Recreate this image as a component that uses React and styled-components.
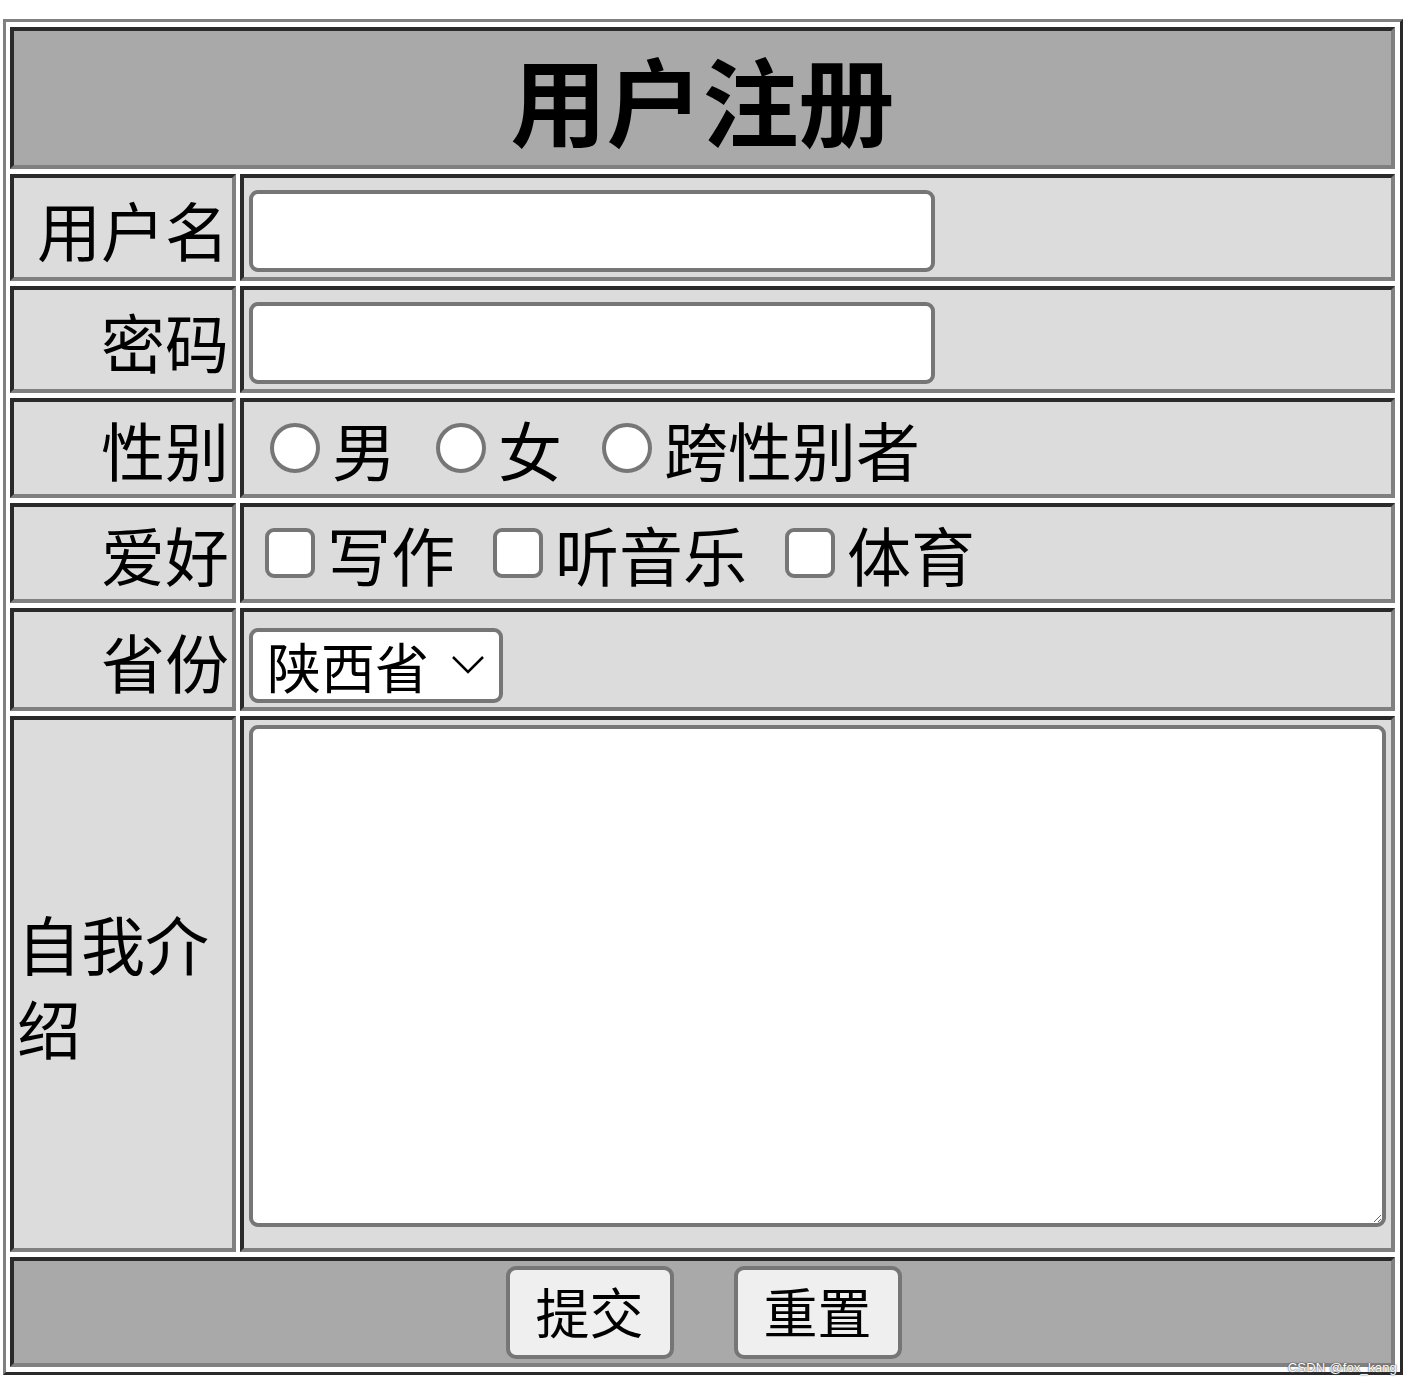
import React from "react";
import styled, { createGlobalStyle } from "styled-components";

/* --- Global --- */
const GlobalStyle = createGlobalStyle`
  *, *::before, *::after {
    box-sizing: border-box;
  }

  body {
    margin: 0;
    background: #ffffff;
    font-family: "Noto Sans CJK SC", "Noto Sans", sans-serif;
    color: #000;
  }
`;

/* --- Data --- */
const genders = ["男", "女", "跨性别者"];
const hobbies = ["写作", "听音乐", "体育"];

/* --- Styles --- */
const Page = styled.div`
  position: relative;
  width: 1412px;
  height: 1386px;
  padding: 19px 0 0 3px;
`;

const FormTable = styled.form`
  width: 1400px;
  display: grid;
  grid-template-columns: 226px 1155px;
  grid-template-rows: 142px 107px 107px 100px 100px 103px 536px 110px;
  gap: 5px 4px;
  padding: 5px 4px;
  border: 3px solid;
  border-color: #808080 #2a2a2a #2a2a2a #808080;
`;

const Cell = styled.div`
  border: 4px solid;
  border-color: #2a2a2a #808080 #808080 #2a2a2a;
  background: ${(p) => (p.$dark ? "#a9a9a9" : "#dcdcdc")};
  display: flex;
  align-items: center;
`;

const TitleCell = styled(Cell)`
  grid-column: 1 / span 2;
  justify-content: center;
`;

const Title = styled.h2`
  margin: 0;
  font-size: 96px;
  font-weight: 700;
  line-height: 1;
`;

const LabelCell = styled(Cell)`
  justify-content: ${(p) => (p.$left ? "flex-start" : "flex-end")};
  padding: 0 3px 0 ${(p) => (p.$left ? "3px" : "0")};
  font-size: 64px;
  line-height: 84px;
`;

const FieldCell = styled(Cell)`
  padding: 0 5px;
  align-items: ${(p) => (p.$top ? "flex-start" : "center")};
  padding-top: ${(p) => (p.$top ? "5px" : "0")};
`;

const ButtonCell = styled(Cell)`
  grid-column: 1 / span 2;
  justify-content: center;
  gap: 60px;
  padding-left: 2px;
`;

const TextInput = styled.input`
  width: 686px;
  height: 82px;
  margin: 6px 0 0;
  border: 4px solid #767676;
  border-radius: 9px;
  background: #fff;
  font-size: 52px;
  outline: none;
`;

const ChoiceGroup = styled.div`
  display: flex;
  align-items: center;
  padding-left: ${(p) => p.$indent}px;
  gap: ${(p) => p.$gap}px;
  font-size: 64px;
  line-height: 84px;
`;

const Choice = styled.label`
  display: flex;
  align-items: center;
  gap: 12px;
`;

const Radio = styled.input.attrs({ type: "radio" })`
  appearance: none;
  width: 50px;
  height: 50px;
  margin: 0;
  border: 4px solid #767676;
  border-radius: 50%;
  background: #fff;
`;

const Checkbox = styled.input.attrs({ type: "checkbox" })`
  appearance: none;
  width: 50px;
  height: 50px;
  margin: 0;
  border: 4px solid #767676;
  border-radius: 9px;
  background: #fff;
`;

const SelectBox = styled.div`
  position: relative;
  width: 254px;
  height: 75px;
  margin-top: 12px;
`;

const Select = styled.select`
  appearance: none;
  width: 100%;
  height: 100%;
  margin: 0;
  padding: 0 0 0 14px;
  border: 4px solid #767676;
  border-radius: 9px;
  background: #fff;
  font-family: "Noto Sans CJK SC", sans-serif;
  font-size: 54px;
  line-height: 60px;
  color: #000;
`;

const Chevron = styled.svg`
  position: absolute;
  right: 18px;
  top: 27px;
  pointer-events: none;
`;

const TextArea = styled.textarea`
  width: 1137px;
  height: 502px;
  margin: 0;
  border: 4px solid #767676;
  border-radius: 9px;
  background: #fff;
  resize: both;
  font-size: 52px;
`;

const Button = styled.button`
  width: 168px;
  height: 93px;
  margin: 0;
  padding: 0 0 4px;
  border: 4px solid #767676;
  border-radius: 10px;
  background: #efefef;
  font-family: "Noto Sans CJK SC", sans-serif;
  font-size: 54px;
  color: #000;
`;

const Watermark = styled.span`
  position: absolute;
  right: 15px;
  bottom: 11px;
  font-family: "Liberation Sans", Arial, sans-serif;
  font-size: 13px;
  color: #fff;
  text-shadow: 0 0 2px #555, 0 0 1px #555;
  letter-spacing: 0.2px;
`;

/* --- Component --- */
export default function App() {
  return (
    <Page>
      <GlobalStyle />
      <FormTable onSubmit={(e) => e.preventDefault()}>
        <TitleCell $dark>
          <Title>用户注册</Title>
        </TitleCell>

        <LabelCell>用户名</LabelCell>
        <FieldCell>
          <TextInput type="text" />
        </FieldCell>

        <LabelCell>密码</LabelCell>
        <FieldCell>
          <TextInput type="password" />
        </FieldCell>

        <LabelCell>性别</LabelCell>
        <FieldCell>
          <ChoiceGroup $indent={21} $gap={40}>
            {genders.map((g) => (
              <Choice key={g}>
                <Radio name="gender" value={g} />
                {g}
              </Choice>
            ))}
          </ChoiceGroup>
        </FieldCell>

        <LabelCell>爱好</LabelCell>
        <FieldCell>
          <ChoiceGroup $indent={16} $gap={38}>
            {hobbies.map((h) => (
              <Choice key={h}>
                <Checkbox name="hobby" value={h} />
                {h}
              </Choice>
            ))}
          </ChoiceGroup>
        </FieldCell>

        <LabelCell>省份</LabelCell>
        <FieldCell>
          <SelectBox>
            <Select defaultValue="陕西省">
              <option>陕西省</option>
              <option>甘肃省</option>
              <option>河南省</option>
            </Select>
            <Chevron width="34" height="20" viewBox="0 0 34 20">
              <path d="M2 2 L17 17 L32 2" fill="none" stroke="#000" strokeWidth="2.5" />
            </Chevron>
          </SelectBox>
        </FieldCell>

        <LabelCell $left>自我介绍</LabelCell>
        <FieldCell $top>
          <TextArea />
        </FieldCell>

        <ButtonCell $dark>
          <Button type="submit">提交</Button>
          <Button type="reset">重置</Button>
        </ButtonCell>
      </FormTable>
      <Watermark>CSDN @fox_kang</Watermark>
    </Page>
  );
}
